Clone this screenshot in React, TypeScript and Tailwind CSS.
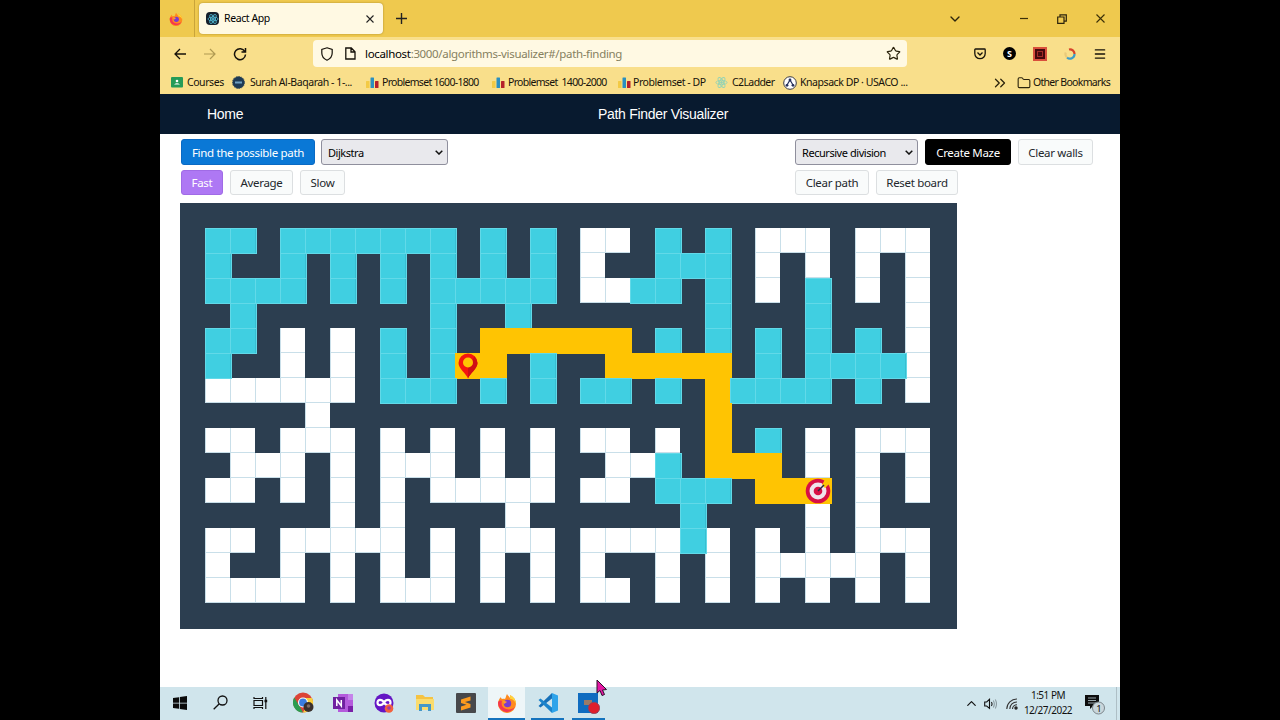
import type { ReactNode } from 'react'
import { Menu, ChevronDown, ChevronUp, ChevronsRight, Folder, Star } from 'lucide-react'

// # wall, . empty, v visited, p shortest path, S start, T target
const MAZE = [
  '###############################',
  '#vv#vvvvvvv#v#v#..#v#v#...#...#',
  '#v##v#v#v#v#v#v#.##vvv#.#.#.#.#',
  '#vvvv#v#v#vvvvv#..vv#v#.#v#.#.#',
  '##v#######v##v#######v###v###.#',
  '#vv#.#.#v#v#pppppp#v#v#v#v#v#.#',
  '#v##.#.#v#vSp#v##ppppp#v#vvvv.#',
  '#......#vvv#v#v#vv#v#pvvvv#v#.#',
  '#####.###############p#########',
  '#..#...#.#.#.#.#..#.#p#v#.#...#',
  '##...#.#...#.#.##..v#ppp#.#.#.#',
  '#..#.#.#.#.....#..#vvv#ppT#.#.#',
  '######.#.####.######v####.#.###',
  '#..#.....#.#...#....v.#.#.#...#',
  '#.##.#.#.#.#.#.#.##.#.#.....#.#',
  '#....#.#...#.#.#..#.#.#.#.#.#.#',
  '###############################',
]

const pathCls = 'w-[27px] h-[26px] z-10 bg-[#ffc402]'

const cellCls: Record<string, string> = {
  '#': 'w-[27px] h-[26px] bg-[#2c3e50]',
  '.': 'w-[25px] h-[25px] bg-white border-l border-b border-[#c9dfe9]',
  v: 'w-[27px] h-[26px] z-10 bg-[#40cfe1] border border-[#62d9e8] shadow-[inset_-1px_0_0_#37bfd1]',
  p: pathCls,
  S: pathCls,
  T: pathCls,
}

function Pin() {
  return (
    <svg width="27" height="26" viewBox="0 0 27 26">
      <path d="M13 25.500C11 20.500 3.500 15.500 3.500 10a9.500 9.500 0 0 1 19 0C22.500 15.500 15 20.500 13 25.500z" fill="#f5150f" />
      <path d="M13 25.500C15 20.500 22.500 15.500 22.500 10A9.500 9.500 0 0 0 19.500 3.500L13 15z" fill="#cf1015" />
      <circle cx="13" cy="9.500" r="5" fill="#ffc402" />
    </svg>
  )
}

function Target() {
  return (
    <svg width="27" height="26" viewBox="0 0 27 26">
      <circle cx="13" cy="13" r="12.300" fill="#d80f45" />
      <circle cx="13" cy="13" r="8.500" fill="#efe3ec" />
      <circle cx="13" cy="13" r="4.300" fill="#d80f45" />
      <path d="M17 7l3-5.500 2 2.500 3 1-5 5z" fill="#ffc402" />
      <path d="M13 13l6-6" stroke="#2c2440" strokeWidth="1.500" />
    </svg>
  )
}

function Firefox({ size }: { size: number }) {
  return (
    <svg width={size} height={size} viewBox="0 0 20 20">
      <path d="M10 1c1 2 2 2 3 4 .5-1 .3-2 0-3 4 2 6 5 6 9a9 9 0 0 1-18 0c0-3 1-5 3-7 0 1 .3 1.500 1 2 1.500-.5 2-.5 3 0 1-2 1-3 2-5z" fill="#ff8a1e" />
      <path d="M1 10a9 9 0 0 0 17 4c-3 3-8 3-11 1-2-1.500-3-4-2-7-2-1-4 0-4 2z" fill="#f5374f" />
      <path d="M13 2c4 2 6 5 6 9-1-3-3-5-6-5 .5-1 .3-3 0-4z" fill="#ffd53a" />
      <circle cx="10.500" cy="10.500" r="3.700" fill="#7a3ad0" />
      <path d="M6 8c2 0 3 0 4 1-1 1-2 1-3 2z" fill="#ff9c2a" />
    </svg>
  )
}

function Atom({ size, color }: { size: number; color: string }) {
  return (
    <svg width={size} height={size} viewBox="0 0 14 14" fill="none" stroke={color} strokeWidth="1">
      <ellipse cx="7" cy="7" rx="6" ry="2.300" />
      <ellipse cx="7" cy="7" rx="6" ry="2.300" transform="rotate(60 7 7)" />
      <ellipse cx="7" cy="7" rx="6" ry="2.300" transform="rotate(120 7 7)" />
      <circle cx="7" cy="7" r="1" fill={color} />
    </svg>
  )
}

function Bars() {
  return (
    <svg width="13" height="12" viewBox="0 0 13 12">
      <rect x="0" y="4" width="3.500" height="7" rx=".5" fill="#f3ca45" />
      <rect x="4.500" y="0.500" width="3.500" height="10.500" rx=".5" fill="#2b8fc0" />
      <rect x="9" y="4" width="3.500" height="7" rx=".5" fill="#b6202a" />
    </svg>
  )
}

function TitleBar() {
  return (
    <div className="flex h-[37px] items-center bg-[#efc94e]">
      <div className="flex w-[35px] h-full items-center justify-center border-r border-[#c9a43a] pr-[2px]">
        <Firefox size={14} />
      </div>
      <div className="ml-1 flex h-[31px] w-[184px] items-center rounded bg-[#fff9e3] pl-[7px] shadow-[0_0_2px_rgba(80,60,0,0.5)]">
        <div className="flex h-[13px] w-[13px] items-center justify-center rounded-sm bg-[#16202c]">
          <Atom size={12} color="#4fb4cf" />
        </div>
        <span className="ml-[5px] pt-px text-[10.5px] tracking-[-0.4px] text-black">React App</span>
        <svg className="ml-auto mr-[9px]" width="8" height="8" stroke="#222" strokeWidth="1.100"><path d="M.5 .5l7 7M7.500 .5l-7 7" /></svg>
      </div>
      <svg className="ml-[13px]" width="11" height="11" stroke="#222" strokeWidth="1.400"><path d="M5.500 0v11M0 5.500h11" /></svg>
      <ChevronDown className="ml-[540px]" size={16} strokeWidth={2} color="#2c240c" />
      <svg className="ml-[57px]" width="8" height="8" stroke="#3c3008" strokeWidth="1.200"><path d="M0 3.500h8" /></svg>
      <svg className="ml-[29px]" width="10" height="10" fill="none" stroke="#2c240c" strokeWidth="1.200"><path d="M.7 3h6.300v6.300H.7zM3 3V.8h6.300v6.300H7" /></svg>
      <svg className="ml-[29px]" width="9" height="9" stroke="#3c3008" strokeWidth="1.100"><path d="M.5 .5l8 8M8.500 .5l-8 8" /></svg>
    </div>
  )
}

function Toolbar() {
  return (
    <div className="flex h-[33px] items-center pl-[14px] pr-[13px]">
      <svg width="12" height="12" fill="none" stroke="#16120a" strokeWidth="1.300"><path d="M12 6H1M6 1L1 6l5 5" /></svg>
      <svg className="ml-[18px]" width="12" height="12" fill="none" stroke="#b09a52" strokeWidth="1.200"><path d="M0 6h11M6 1l5 5-5 5" /></svg>
      <svg className="ml-[17px]" width="14" height="14" fill="none" stroke="#16120a" strokeWidth="1.500"><path d="M11.800 4.500A5.500 5.500 0 1 0 12.500 7.500M12.500 1v4H8.500" /></svg>
      <div className="ml-[66px] flex h-[27px] w-[594px] items-center rounded bg-[#fff9e3] pl-[8px] pr-[6px]">
        <svg width="12" height="14" fill="none" stroke="#16120a" strokeWidth="1.200"><path d="M6 .8L11.200 2.500V6c0 3.500-2.500 6-5.200 7.200C3.300 12 .8 9.500 .8 6V2.500z" /></svg>
        <svg className="ml-[12px]" width="11" height="13" fill="none" stroke="#16120a" strokeWidth="1.300"><path d="M.8 1h5.500l3.700 3.700V12H.8zM6 1v4h4" /></svg>
        <span className="ml-[9px] pt-px text-[11.5px] tracking-[-0.33px] text-black">
          localhost<span className="text-[#85805f]">:3000/algorithms-visualizer#/path-finding</span>
        </span>
        <Star className="ml-auto" size={15} strokeWidth={1.900} color="#2c240c" />
      </div>
      <svg className="ml-[67px]" width="12" height="12" fill="none" stroke="#16120a" strokeWidth="1.300"><path d="M1.500 1h9q.7 0 .7 .7V5.500a5.200 5.200 0 0 1-10.400 0V1.700q0-.7 .7-.7zM3.500 4.500L6 7l2.500-2.500" /></svg>
      <div className="ml-[17px] flex h-[13px] w-[13px] items-center justify-center rounded-full bg-black text-[9px] font-bold text-white">S</div>
      <div className="ml-[17px] flex h-[14px] w-[14px] items-center justify-center border-2 border-[#d9503c] bg-[#45090c]">
        <div className="h-[6px] w-[6px] border border-[#a32a27]" />
      </div>
      <svg className="ml-[17px]" width="12" height="12" fill="none" strokeWidth="2.200">
        <path d="M5 1.500A4.500 4.500 0 0 1 10.500 6" stroke="#d8432b" />
        <path d="M10.500 6A4.500 4.500 0 0 1 3 9.500" stroke="#3c9cc8" />
        <path d="M3 9.500A4.500 4.500 0 0 1 1.800 4.500" stroke="#e8ca7a" />
      </svg>
      <Menu className="ml-auto" size={14} strokeWidth={2.200} color="#16120a" />
    </div>
  )
}

function Bookmark({ icon, label, cls }: { icon: ReactNode; label: string; cls: string }) {
  return (
    <div className={`flex shrink-0 items-center whitespace-pre ${cls}`}>
      {icon}
      <span>{label}</span>
    </div>
  )
}

function Bookmarks() {
  return (
    <div className="flex h-6 items-center pl-[11px] pt-px text-[10.5px] tracking-[-0.44px] text-[#16120a]">
      <Bookmark
        cls="w-[61px] gap-[4px]"
        label="Courses"
        icon={<svg width="12" height="11"><rect width="12" height="10.500" rx="1" fill="#259b58" /><circle cx="6" cy="4" r="1.300" fill="#fff" /><path d="M3 7.500q3-2.500 6 0z" fill="#fff" /></svg>}
      />
      <Bookmark
        cls="w-[134px] gap-[5px]"
        label="Surah Al-Baqarah - 1-..."
        icon={<svg width="13" height="13"><circle cx="6.500" cy="6.500" r="6" fill="#1d3a55" stroke="#3f5258" strokeDasharray="1.500 1" /><path d="M3 6.500h7" stroke="#6fa0c4" strokeWidth="2" /></svg>}
      />
      <Bookmark cls="w-[126px] gap-[3px] tracking-[-0.7px]" label="Problemset 1600-1800" icon={<Bars />} />
      <Bookmark cls="w-[126px] gap-[3px] tracking-[-0.7px]" label="Problemset  1400-2000" icon={<Bars />} />
      <Bookmark cls="w-[97px] gap-[2px]" label="Problemset - DP" icon={<Bars />} />
      <Bookmark cls="w-[68px] gap-[4px] tracking-[-0.6px]" label="C2Ladder" icon={<Atom size={13} color="#93d3b5" />} />
      <Bookmark
        cls="gap-[3px]"
        label="Knapsack DP · USACO ..."
        icon={<svg width="14" height="14"><circle cx="7" cy="7" r="6.300" fill="#fff" stroke="#3a3a44" /><path d="M4 9L7 4l3 5" fill="none" stroke="#24305c" strokeWidth="1.200" /><circle cx="7" cy="4" r="1.400" fill="#24305c" /><circle cx="4" cy="9.300" r="1.400" fill="#24305c" /><circle cx="10" cy="9.300" r="1.400" fill="#24305c" /></svg>}
      />
      <div className="ml-auto flex items-center pr-[10px] whitespace-nowrap tracking-[-0.68px]">
        <ChevronsRight size={18} strokeWidth={1.700} color="#2c240c" />
        <Folder className="ml-[8px] mr-[2px]" size={14} strokeWidth={1.900} color="#2c240c" />
        Other Bookmarks
      </div>
    </div>
  )
}

function Button({ children, cls }: { children: ReactNode; cls: string }) {
  return (
    <button className={`flex h-[25px] shrink-0 items-center justify-center whitespace-nowrap rounded-[3px] border pt-px text-[11.5px] tracking-[-0.32px] ${cls}`}>
      {children}
    </button>
  )
}

function Select({ label, cls }: { label: string; cls: string }) {
  return (
    <div className={`flex h-[26px] shrink-0 items-center justify-between rounded-[3px] border border-[#8f8f9d] bg-[#e9e9ed] pl-[6px] pr-[4px] text-[11px] tracking-[-0.45px] text-black ${cls}`}>
      <span className="whitespace-nowrap pt-[2px]">{label}</span>
      <svg width="8" height="5" fill="none" stroke="#111" strokeWidth="1.500"><path d="M.7 .7L4 4l3.300-3.300" /></svg>
    </div>
  )
}

const plain = 'bg-[#f9fbfb] border-[#dcdfe1] text-[#23272b]'

function Controls() {
  return (
    <div className="flex h-[69px] pl-[21px] pt-[5px]">
      <div className="flex w-[614px] flex-col gap-[5px]">
        <div className="flex h-[26px] gap-[6px]">
          <Button cls="w-[134px] h-[26px] bg-[#0a78d6] border-[#0a6ac4] text-white">Find the possible path</Button>
          <Select cls="w-[127px]" label="Dijkstra" />
        </div>
        <div className="flex gap-[7px]">
          <Button cls="w-[42px] bg-[#ae78f4] border-[#a06be6] text-white">Fast</Button>
          <Button cls={`w-[63px] ${plain}`}>Average</Button>
          <Button cls={`w-[45px] ${plain}`}>Slow</Button>
        </div>
      </div>
      <div className="flex flex-col gap-[5px]">
        <div className="flex h-[26px] gap-[7px]">
          <Select cls="w-[123px]" label="Recursive division" />
          <Button cls="w-[86px] h-[26px] bg-black border-black text-white">Create Maze</Button>
          <Button cls={`w-[75px] h-[26px] ${plain}`}>Clear walls</Button>
        </div>
        <div className="flex gap-[7px]">
          <Button cls={`w-[74px] ${plain}`}>Clear path</Button>
          <Button cls={`w-[82px] ${plain}`}>Reset board</Button>
        </div>
      </div>
    </div>
  )
}

function Board() {
  return (
    <div className="ml-[20px] grid w-[777px] grid-cols-[repeat(31,25px)] grid-rows-[repeat(17,25px)]">
      {MAZE.flatMap((row, y) =>
        row.split('').map((c, x) => (
          <div key={`${y}-${x}`} className={cellCls[c]}>
            {c === 'S' && <Pin />}
            {c === 'T' && <Target />}
          </div>
        ))
      )}
    </div>
  )
}

function TaskItem({ children, active, running }: { children: ReactNode; active?: boolean; running?: boolean }) {
  return (
    <div className="flex h-full w-[41px] justify-center">
      <div className={`flex h-full flex-col items-center ${active ? 'w-[37px] bg-[#eef6f8]' : 'w-[33px]'}`}>
        <div className="flex flex-1 items-center">{children}</div>
        <div className={`h-[2px] w-full ${running ? 'bg-[#1573bd]' : ''}`} />
      </div>
    </div>
  )
}

function Taskbar() {
  return (
    <div className="flex h-[33px] items-center bg-[#d0e5ec]">
      <div className="-ml-px -mr-px flex h-full">
        <TaskItem>
          <svg width="14" height="14" fill="#0b0b0b"><path d="M0 2l6-.8v5.500H0zM6.800 1.100L14 0v6.700H6.800zM0 7.500h6v5.300L0 12zM6.800 7.500H14V14l-7.200-1z" /></svg>
        </TaskItem>
        <TaskItem>
          <svg className="-ml-px" width="15" height="15" fill="none" stroke="#111" strokeWidth="1.300"><circle cx="9.500" cy="5.500" r="4.500" /><path d="M6.300 8.700L.7 14.300" /></svg>
        </TaskItem>
        <TaskItem>
          <svg className="-ml-[2px]" width="15" height="14" fill="none" stroke="#111" strokeWidth="1.200"><path d="M1 1v1.500h8.500V1M1 4.500h8.500v5H1zM1 13v-1.500h8.500V13M12.800 1v12" /><path d="M11.500 5h2.700" strokeWidth="2.500" /></svg>
        </TaskItem>
      </div>
      <TaskItem>
        <svg className="ml-[3px]" width="21" height="21" viewBox="0 0 21 21">
          <circle cx="10" cy="10.500" r="10" fill="#dc4437" />
          <path d="M1.300 5.500L7 15l3 5.500A10 10 0 0 1 1.300 5.500z" fill="#2c9c50" />
          <path d="M10 6h9a10 10 0 0 1-9 14.500l4-8z" fill="#f9cf3d" />
          <circle cx="10" cy="10.500" r="5" fill="#fff" />
          <circle cx="10" cy="10.500" r="3.900" fill="#3b7de0" />
          <circle cx="15.500" cy="15" r="5" fill="#3a302c" />
          <circle cx="15.500" cy="14" r="1.800" fill="#806c62" />
        </svg>
      </TaskItem>
      <TaskItem>
        <svg width="20" height="20">
          <path d="M5 1h15v18H5z" fill="#b45bdc" />
          <path d="M15 1h5v6h-5z" fill="#c583ea" />
          <path d="M15 13h5v6h-5z" fill="#7b1fa8" />
          <rect x="0" y="4" width="12" height="12" fill="#7020a0" />
          <path d="M3.800 13V7l4.500 6V7" fill="none" stroke="#fff" strokeWidth="1.500" />
        </svg>
      </TaskItem>
      <TaskItem>
        <svg width="20" height="20">
          <circle cx="10" cy="10" r="9.500" fill="#6416c4" />
          <path d="M10 9.500C8 6 3.500 6 3.500 9.500s4.500 3.500 6.500 0 6.500-3.500 6.500 0-4.500 3.500-6.500 0z" fill="none" stroke="#fff" strokeWidth="2.200" />
          <circle cx="15" cy="15.500" r="4.300" fill="#f4613d" />
          <circle cx="15" cy="15" r="1.800" fill="#a23ca8" />
        </svg>
      </TaskItem>
      <TaskItem>
        <svg width="20" height="18">
          <path d="M1 1h7l2 2h8v13H1z" fill="#f5c343" />
          <path d="M1 5h18v11H1z" fill="#fbdc6d" />
          <path d="M4 10h12v7h-3v-4H7v4H4z" fill="#4598c8" />
        </svg>
      </TaskItem>
      <TaskItem>
        <svg width="20" height="20">
          <rect width="20" height="20" rx="1" fill="#47484b" />
          <path d="M14.500 3.500v4L9 9l5.500 2v3.500L5 17.500v-4l5.500-1.700L5 10V6.500z" fill="#fb9a1e" />
        </svg>
      </TaskItem>
      <TaskItem active running><Firefox size={20} /></TaskItem>
      <TaskItem running>
        <svg width="20" height="20">
          <path d="M14 0v5.500L2.500 14.500.5 13z" fill="#1670b8" />
          <path d="M.5 7l2-1.500L14 14.500V20z" fill="#1b84cc" />
          <path d="M14 0l6 2.500v15L14 20z" fill="#2fa4ea" />
        </svg>
      </TaskItem>
      <TaskItem running>
        <svg width="22" height="22">
          <rect x="0" y="1" width="20" height="20" fill="#0f6cc0" />
          <rect x="6" y="8" width="8" height="5" fill="#9a7a68" />
          <circle cx="16" cy="16" r="5.700" fill="#e01f2c" stroke="#8c4560" strokeWidth=".8" />
        </svg>
      </TaskItem>
      <div className="ml-auto flex h-full items-center text-[#111]">
        <ChevronUp size={15} strokeWidth={1.900} />
        <svg className="ml-[5px]" width="14" height="12" fill="none" stroke="#111" strokeWidth="1.100"><path d="M.7 4h2L5.500 1.300v9L2.700 8h-2zM7.500 4q1.200 2 0 4" /><path d="M9.300 2.500q2 3.500 0 7M11.300 1.500q2.400 4.500 0 9" stroke="#8b9aa0" /></svg>
        <svg className="ml-[8px]" width="12" height="12" fill="none" stroke="#333" strokeWidth="1.100"><path d="M.8 11A10 10 0 0 1 11 1M3.800 11A7 7 0 0 1 11 4M6.500 11A4.500 4.500 0 0 1 11 6.800" /><circle cx="10" cy="10" r="1.200" fill="#111" /></svg>
        <div className="ml-[5px] w-[50px] pb-[2px] text-center text-[10px] leading-[15px] tracking-[-0.5px] whitespace-nowrap">
          <div>1:51 PM</div>
          <div>12/27/2022</div>
        </div>
        <svg className="ml-[12px] mr-[10px]" width="21" height="22">
          <path d="M0 2h14v11H8l-3 3v-3H0z" fill="#0d0d0d" />
          <path d="M3 5h8M3 7.500h8M3 10h8" stroke="#a9b8be" strokeWidth=".9" />
          <circle cx="13.500" cy="15" r="6" fill="#c9d6dc" stroke="#7b868b" />
          <text x="11.200" y="18.500" fontSize="9.500" fill="#111">1</text>
        </svg>
        <div className="h-full w-[4px] border-l border-[#aebfc6]" />
      </div>
    </div>
  )
}

export default function App() {
  return (
    <div className="h-[720px] w-[1280px] overflow-hidden bg-black font-['Noto_Sans','Open_Sans',sans-serif]">
      <div className="relative mx-auto flex h-full w-[960px] flex-col bg-white">
        <TitleBar />
        <div className="h-[57px] bg-[#f9df8b]">
          <Toolbar />
          <Bookmarks />
        </div>
        <nav className="grid h-[40px] grid-cols-3 items-center bg-[#081a2f] font-['Liberation_Sans',sans-serif] text-[14px] tracking-[-0.3px] text-white">
          <span className="pl-[47px]">Home</span>
          <span className="pl-[118px] whitespace-nowrap">Path Finder Visualizer</span>
        </nav>
        <Controls />
        <Board />
        <div className="flex-1" />
        <Taskbar />
        <svg className="absolute left-[436px] top-[679px]" width="12" height="17">
          <path d="M1 1v13l3-2.500 2 5 2.500-1-2-4.500 4-.5z" fill="#e617a4" stroke="#2a1028" strokeWidth="1" />
        </svg>
      </div>
    </div>
  )
}
